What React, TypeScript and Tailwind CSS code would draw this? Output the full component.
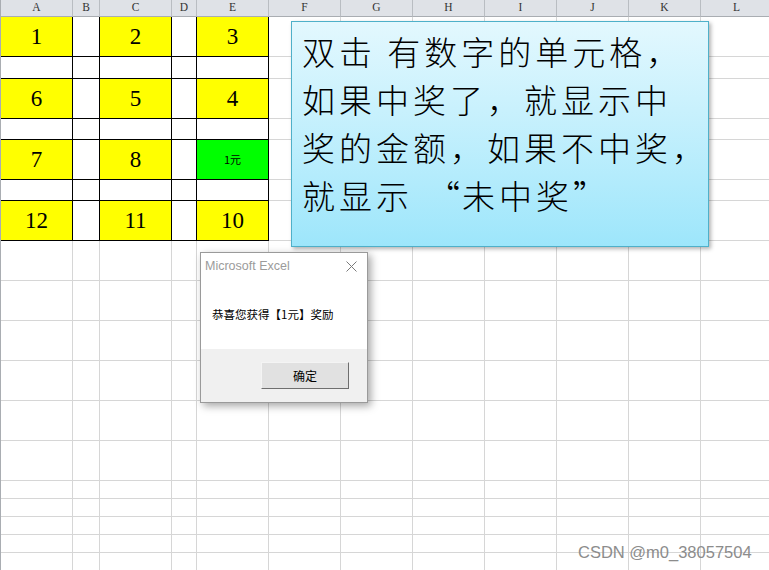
import React from "react";

const cols = ["A", "B", "C", "D", "E", "F", "G", "H", "I", "J", "K", "L"];

// data rows: height class per row
const rowHeights = [
  "h-[40px]", "h-[22px]", "h-[40px]", "h-[21px]", "h-[40px]", "h-[21px]", "h-[40px]",
  "h-[40px]", "h-[40px]", "h-[40px]", "h-[40px]", "h-[40px]", "h-[40px]",
  "h-[18px]", "h-[18px]", "h-[18px]", "h-[18px]", "h-[18px]",
];

const prizes: Record<string, string> = {
  "0-0": "1", "0-2": "2", "0-4": "3",
  "2-0": "6", "2-2": "5", "2-4": "4",
  "4-0": "7", "4-2": "8", "4-4": "1元",
  "6-0": "12", "6-2": "11", "6-4": "10",
};

const gridCols =
  "grid grid-cols-[72px_27px_72px_25px_72px_72px_72px_72px_72px_72px_72px_72px]";

function Cell({ r, c }: { r: number; c: number }) {
  const inBoard = r < 7 && c < 5;
  const value = prizes[`${r}-${c}`];
  const isPrize = inBoard && r % 2 === 0 && c % 2 === 0;
  const isWin = r === 4 && c === 4;

  let cls = "box-border border-r border-b flex items-center justify-center ";
  cls += inBoard ? "border-black " : "border-[#d6d6d6] ";
  if (isWin) cls += "bg-[#00ff00] ";
  else if (isPrize) cls += "bg-[#ffff00] ";
  else cls += "bg-white ";

  return (
    <div className={cls + rowHeights[r]}>
      {value &&
        (isWin ? (
          <span className="text-[11px] text-black font-['Noto_Sans_CJK_SC',sans-serif] leading-none">
            {value}
          </span>
        ) : (
          <span className="text-[23px] text-black font-['Liberation_Serif',serif] leading-none">
            {value}
          </span>
        ))}
    </div>
  );
}

export default function App() {
  return (
    <div className="relative w-[769px] h-[570px] overflow-hidden bg-white">
      <div className={gridCols + " w-[780px] border-l border-[#a9adb2]"}>
        {cols.map((c) => (
          <div
            key={c}
            className="h-[17px] box-border border-r border-b border-r-[#b9bdc2] border-b-[#a9adb2] bg-[#dfe2e7] flex items-center justify-center text-[11.5px] leading-none text-[#333] font-['Liberation_Serif',serif]"
          >
            {c}
          </div>
        ))}
        {rowHeights.map((_, r) =>
          cols.map((_, c) => <Cell key={`${r}-${c}`} r={r} c={c} />)
        )}
      </div>

      {/* text box shape */}
      <div className="absolute left-[291px] top-[21px] w-[418px] h-[226px] border border-[#4fb0c9] bg-gradient-to-b from-[#e3f8fe] to-[#9de6fb] shadow-[2px_2px_4px_rgba(0,0,0,0.3)] pl-[10px] pt-[5px]">
        <div className="text-[33px] leading-[48px] tracking-[4px] font-light text-black font-['Noto_Sans_CJK_SC',sans-serif] whitespace-nowrap">
          <div>双击 有数字的单元格，</div>
          <div>如果中奖了，就显示中</div>
          <div>奖的金额，如果不中奖，</div>
          <div>
            就显示<span className="ml-[14px] tracking-[2px]">“</span>未中奖”
          </div>
        </div>
      </div>

      {/* message box */}
      <div className="absolute left-[200px] top-[252px] w-[168px] h-[151px] border border-[#9a9a9a] bg-white shadow-[3px_3px_8px_rgba(0,0,0,0.35)] flex flex-col">
        <div className="flex items-center justify-between h-[26px] pl-[4px] pr-[10px]">
          <span className="text-[12.5px] text-[#9b9b9b] font-['Liberation_Sans',sans-serif]">
            Microsoft Excel
          </span>
          <svg width="11" height="11" viewBox="0 0 11 11">
            <path d="M0.5 0.5 L10.5 10.5 M10.5 0.5 L0.5 10.5" stroke="#7a7a7a" strokeWidth="1" />
          </svg>
        </div>
        <div className="flex-1 bg-white pl-[11px] pt-[27px] text-[11.5px] text-black font-['Noto_Sans_CJK_SC',sans-serif]">
          恭喜您获得【1元】奖励
        </div>
        <div className="h-[53px] bg-[#f0f0f0] flex items-start justify-end pr-[18px] pt-[13px]">
          <button className="w-[88px] h-[27px] bg-[#e1e1e1] border border-t-[#f4f4f4] border-l-[#f4f4f4] border-r-[#6e6e6e] border-b-[#6e6e6e] text-[12px] text-black font-['Noto_Sans_CJK_SC',sans-serif] flex items-center justify-center">
            确定
          </button>
        </div>
      </div>

      <div className="absolute left-[578px] top-[540px] text-[16.5px] text-[#8c8c8c] font-['Liberation_Sans',sans-serif] whitespace-nowrap">
        CSDN @m0_38057504
      </div>
    </div>
  );
}
